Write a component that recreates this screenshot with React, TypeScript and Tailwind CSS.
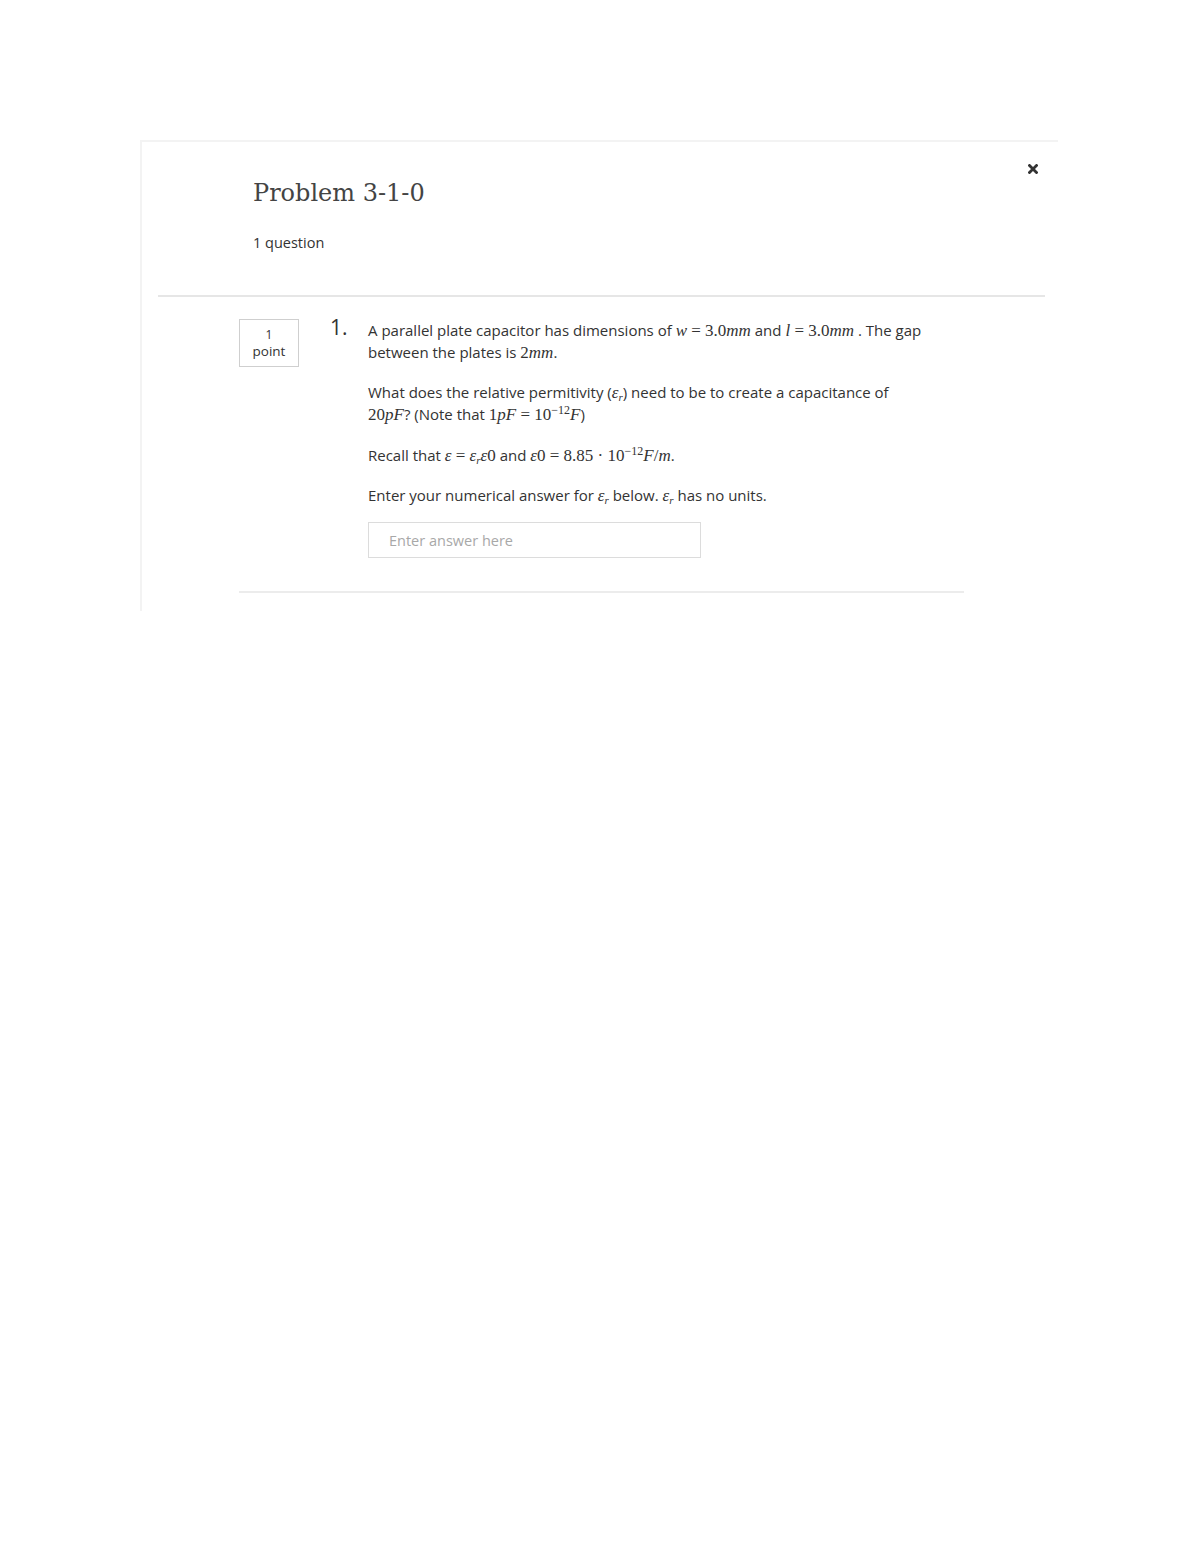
import React from "react";

const M = ({ children }: { children: React.ReactNode }) => (
  <span className="font-['Liberation_Serif',serif] text-[17px] leading-none">{children}</span>
);
const I = ({ children }: { children: React.ReactNode }) => <i>{children}</i>;
const Er = () => (
  <M>
    <I>ε</I>
    <sub className="text-[11px] italic">r</sub>
  </M>
);

export default function App() {
  return (
    <div className="min-h-[1553px] bg-white font-['Open_Sans',sans-serif] text-[#3d3d3d]">
      <div className="pt-[140px] pl-[140px]">
        <div className="relative w-[918px] border-l-2 border-t-2 border-[#f3f3f3] pb-[18px]">
          <button className="absolute right-[20px] top-[22px] text-[#333]" aria-label="close">
            <svg width="10" height="10" viewBox="0 0 10 10">
              <path d="M1.5 1.5 L8.5 8.5 M8.5 1.5 L1.5 8.5" stroke="#333" strokeWidth="2.8" strokeLinecap="square" />
            </svg>
          </button>
          <div className="pl-[111px] pt-[34px]">
            <h1 className="font-['DejaVu_Serif',serif] text-[24px] leading-[34px] text-[#444] font-light">Problem 3-1-0</h1>
            <div className="mt-[23px] text-[14.5px] leading-[20px] text-[#333]">1 question</div>
          </div>
          <div className="ml-[16px] mt-[42px] h-[2px] w-[887px] bg-[#e6e6e6]" />
          <div className="ml-[97px] mt-[22px] flex">
            <div className="flex h-[48px] w-[60px] flex-col items-center justify-center border border-[#cfcfcf] text-[13.5px] leading-[17px] text-[#333]">
              <span className="text-[12px]">1</span>
              <span>point</span>
            </div>
            <div className="ml-[31px] w-[38px] text-[21px] leading-[16px] text-[#333]">1.</div>
            <div className="text-[15px] leading-[22px] text-[#333]">
              <p>
                A parallel plate capacitor has dimensions of <M><I>w</I> = 3.0<I>mm</I></M> and <M><I>l</I> = 3.0<I>mm</I></M> . The gap
                <br />
                between the plates is <M>2<I>mm</I></M>.
              </p>
              <p className="mt-[18px]">
                What does the relative permitivity (<Er />) need to be to create a capacitance of
                <br />
                <M>20<I>pF</I></M>? (Note that <M>1<I>pF</I> = 10<sup className="text-[12px]">−12</sup><I>F</I></M>)
              </p>
              <p className="mt-[19px]">
                Recall that <M><I>ε</I> = <I>ε<sub className="text-[11px]">r</sub>ε</I>0</M> and <M><I>ε</I>0 = 8.85 · 10<sup className="text-[12px]">−12</sup><I>F</I>/<I>m</I></M>.
              </p>
              <p className="mt-[18px]">
                Enter your numerical answer for <Er /> below. <Er /> has no units.
              </p>
              <input
                className="mt-[16px] h-[36px] w-[333px] border border-[#dcdcdc] px-[20px] text-[14.5px] text-[#333] outline-none placeholder:text-[#a8a8a8]"
                placeholder="Enter answer here"
              />
            </div>
          </div>
          <div className="ml-[97px] mt-[33px] h-[2px] w-[725px] bg-[#ececec]" />
        </div>
      </div>
    </div>
  );
}
